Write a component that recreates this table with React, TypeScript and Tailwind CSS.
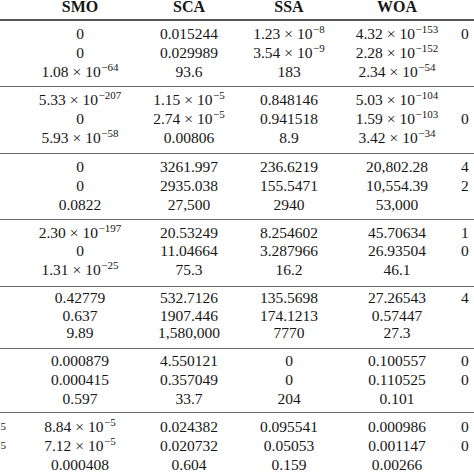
import React from "react";

type Group = {
  box: string;
  row: string;
  left: string[];
  smo: string[];
  sca: string[];
  ssa: string[];
  woa: string[];
  right: string[];
};

const cols = "grid grid-cols-[10px_140px_78px_122px_94px_1fr]";

const groups: Group[] = [
  {
    box: "h-[65.75px] pt-[2.5px] border-b-[1.5px] border-[#6a6a6a]",
    row: "h-[19px] leading-[19px]",
    left: ["", "", ""],
    smo: ["0", "0", "1.08e-64"],
    sca: ["0.015244", "0.029989", "93.6"],
    ssa: ["1.23e-8", "3.54e-9", "183"],
    woa: ["4.32e-153", "2.28e-152", "2.34e-54"],
    right: ["0", "", ""],
  },
  {
    box: "h-[67px] pt-[2.75px] border-b-[1.5px] border-[#6a6a6a]",
    row: "h-[19px] leading-[19px]",
    left: ["", "", ""],
    smo: ["5.33e-207", "0", "5.93e-58"],
    sca: ["1.15e-5", "2.74e-5", "0.00806"],
    ssa: ["0.848146", "0.941518", "8.9"],
    woa: ["5.03e-104", "1.59e-103", "3.42e-34"],
    right: ["", "0", ""],
  },
  {
    box: "h-[66px] pt-[2.75px] border-b-[1.5px] border-[#6a6a6a]",
    row: "h-[19px] leading-[19px]",
    left: ["", "", ""],
    smo: ["0", "0", "0.0822"],
    sca: ["3261.997", "2935.038", "27,500"],
    ssa: ["236.6219", "155.5471", "2940"],
    woa: ["20,802.28", "10,554.39", "53,000"],
    right: ["4", "2", ""],
  },
  {
    box: "h-[67px] pt-[3.75px] border-b-[1.5px] border-[#6a6a6a]",
    row: "h-[18.5px] leading-[18.5px]",
    left: ["", "", ""],
    smo: ["2.30e-197", "0", "1.31e-25"],
    sca: ["20.53249", "11.04664", "75.3"],
    ssa: ["8.254602", "3.287966", "16.2"],
    woa: ["45.70634", "26.93504", "46.1"],
    right: ["1", "0", ""],
  },
  {
    box: "h-[62px] pt-[2.5px] border-b-[1.5px] border-[#6a6a6a]",
    row: "h-[17.5px] leading-[17.5px]",
    left: ["", "", ""],
    smo: ["0.42779", "0.637", "9.89"],
    sca: ["532.7126", "1907.446", "1,580,000"],
    ssa: ["135.5698", "174.1213", "7770"],
    woa: ["27.26543", "0.57447", "27.3"],
    right: ["4", "", ""],
  },
  {
    box: "h-[64px] pt-[1.75px] border-b-[1.5px] border-[#6a6a6a]",
    row: "h-[19px] leading-[19px]",
    left: ["", "", ""],
    smo: ["0.000879", "0.000415", "0.597"],
    sca: ["4.550121", "0.357049", "33.7"],
    ssa: ["0", "0", "204"],
    woa: ["0.100557", "0.110525", "0.101"],
    right: ["0", "0", ""],
  },
  {
    box: "pt-[3.75px]",
    row: "h-[19px] leading-[19px]",
    left: ["", "5", "5"],
    smo: ["8.84e-5", "7.12e-5", "0.000408"],
    sca: ["0.024382", "0.020732", "0.604"],
    ssa: ["0.095541", "0.05053", "0.159"],
    woa: ["0.000986", "0.001147", "0.00266"],
    right: ["0", "0", ""],
  },
];

function Value({ v }: { v: string }) {
  if (!v.includes("e-")) return <span>{v}</span>;
  const [m, e] = v.split("e-");
  return (
    <span>
      {m}
      <span className="mx-[4px]">×</span>
      10
      <sup className="text-[11px] ml-[0.5px]">−{e}</sup>
    </span>
  );
}

function Cell({ v }: { v: string }) {
  return (
    <div className="flex justify-center whitespace-nowrap">
      <Value v={v} />
    </div>
  );
}

export default function App() {
  return (
    <div
      className="w-[474px] h-[474px] overflow-hidden bg-white text-[#161616] text-[15.5px]"
      style={{ fontFamily: '"Liberation Serif", "Times New Roman", serif' }}
    >
      {/* header, top half cut off */}
      <div className={`${cols} h-[21px] border-b-2 border-[#555555] font-bold text-[16px] leading-[14px]`}>
        <div />
        <div className="flex justify-center">SMO</div>
        <div className="flex justify-center">SCA</div>
        <div className="flex justify-center">SSA</div>
        <div className="flex justify-center">WOA</div>
        <div />
      </div>

      {groups.map((g, gi) => (
        <div key={gi} className={g.box}>
          {[0, 1, 2].map((r) => (
            <div key={r} className={`${cols} ${g.row}`}>
              <div className="flex justify-end pr-[4px]">
                {g.left[r] && <sup className="text-[11px] -top-[0.9em]">{g.left[r]}</sup>}
              </div>
              <Cell v={g.smo[r]} />
              <Cell v={g.sca[r]} />
              <Cell v={g.ssa[r]} />
              <Cell v={g.woa[r]} />
              <div className="pl-[17px] whitespace-nowrap">{g.right[r]}</div>
            </div>
          ))}
        </div>
      ))}
    </div>
  );
}
